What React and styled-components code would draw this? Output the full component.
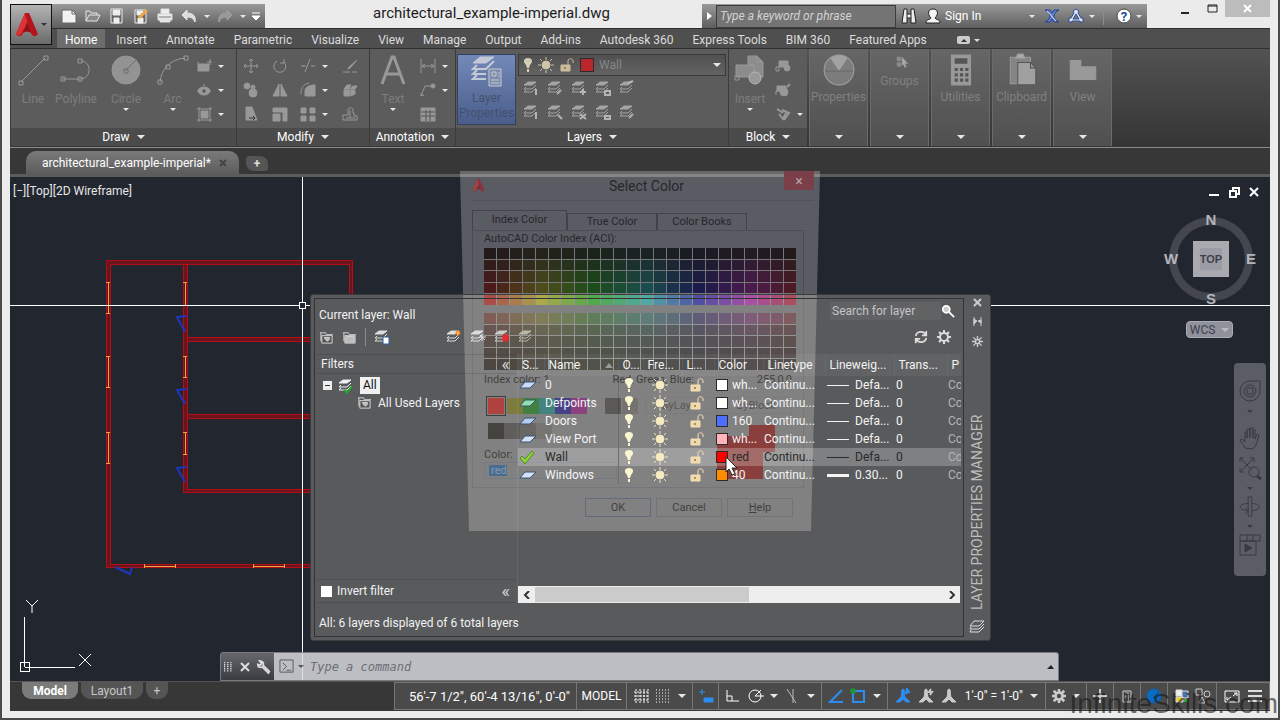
import React, { useState } from "react";
import styled, { createGlobalStyle } from "styled-components";

const GlobalStyle = createGlobalStyle`
  * {
    box-sizing: border-box;
  }

  body {
    margin: 0;
    font-family: Roboto, "Open Sans", sans-serif;
    font-size: 12px;
    color: #e6e6e6;
    background: #4a4a4a;
  }

  button, input, select {
    font: inherit;
    color: inherit;
    margin: 0;
    padding: 0;
    border: none;
    background: none;
  }

  svg {
    display: block;
    flex: none;
  }
`;

// Window frame
const Page = styled.div`
  position: relative;
  display: flex;
  flex-direction: column;
  min-height: 100vh;
  padding: 0 8px 7px;
  border: solid #4a4a4a;
  border-width: 0 2px 2px;
  background: #ebebeb;
  overflow: hidden;
`;

const Header = styled.header`
  display: grid;
  grid-template-columns: 42px 1fr;
  grid-template-rows: 28px 21px;
`;

const AppButton = styled.button`
  grid-area: 1 / 1 / 3 / 2;
  z-index: 1;
  display: flex;
  align-items: center;
  justify-content: center;
  gap: 2px;
  height: 41px;
  margin-top: 4px;
  border: 1px solid #111;
  background: linear-gradient(#b4b4b4, #6a6a6a);
`;

const TitleRow = styled.div`
  grid-area: 1 / 2;
  display: flex;
  align-items: flex-end;
`;

const BarGroup = styled.div`
  display: flex;
  align-items: center;
  height: 24px;
  background: linear-gradient(#9a9a9a, #5e5e5e);
`;

const QuickBar = styled(BarGroup)`
  width: 213px;
  padding-left: 5px;
`;

const QuickButton = styled.button`
  display: flex;
  align-items: center;
  justify-content: center;
  width: ${(p) => p.$w || 24}px;
  height: 22px;
`;

const FileTitle = styled.h1`
  flex: 1;
  margin: 0;
  padding-left: 16px;
  font-size: 15px;
  font-weight: 400;
  line-height: 30px;
  text-align: center;
  color: #1c1c1c;
`;

const SearchGroup = styled(BarGroup)`
  width: 445px;
`;

const SearchInput = styled.input`
  width: 180px;
  height: 23px;
  padding-left: 3px;
  border: 1px solid #3c3c3c;
  background: #747474;
  font-style: italic;

  &::placeholder {
    color: #d2d2d2;
    opacity: 1;
  }
`;

const SignIn = styled.button`
  width: 77px;
  text-align: left;
  color: #fff;
`;

const BarDivider = styled.span`
  width: 1px;
  height: 18px;
  margin: 0 ${(p) => p.$gap || 0}px;
  background: #8c8c8c;
`;

const WindowButtons = styled.div`
  display: flex;
  align-self: flex-start;
  align-items: center;
  width: 123px;
  height: 17px;
  padding-left: 25px;
  color: #222;
`;

const WindowButton = styled.button`
  display: flex;
  align-items: center;
  justify-content: center;
  width: 27px;
  height: 17px;
`;

const CloseWindow = styled(WindowButton)`
  width: 45px;
  background: #bcbcbc;
  color: #fff;
`;

const TabRow = styled.nav`
  grid-area: 2 / 1 / 3 / 3;
  display: flex;
  align-items: stretch;
  padding-left: 47px;
  border: solid #303030;
  border-width: 1px 0;
  background: #4f4f4f;
`;

const RibbonTab = styled.button`
  padding: 2px 8px 0;
  margin-right: 3px;
  color: ${(p) => (p.$active ? "#fff" : "#dcdcdc")};
  background: ${(p) => (p.$active ? "#6d6d6d" : "transparent")};
`;

// Ribbon
const Ribbon = styled.section`
  display: flex;
  height: 99px;
  padding-bottom: 1px;
  border-bottom: 1px solid #8b8b8b;
  background: linear-gradient(#525252, #353535);
`;

const Panel = styled.div`
  display: flex;
  flex-direction: column;
  width: ${(p) => p.$w}px;
  border-left: 1px solid #3b3b3b;
  background: #5c5c5c;
`;

const PanelBody = styled.div`
  display: flex;
  flex: 1;
  padding: 5px 0 0 1px;
`;

const PanelTitle = styled.button`
  display: flex;
  align-items: center;
  justify-content: center;
  gap: 7px;
  height: 18px;
  color: #fff;
  background: #4b4b4b;
`;

const BigTool = styled.button`
  display: flex;
  flex-direction: column;
  align-items: center;
  width: ${(p) => p.$w}px;
  height: 71px;
  color: #7d7d7d;

  span {
    line-height: 18px;
  }
`;

const CaretGap = styled.i`
  display: block;
  padding-top: 4px;
`;

const ToolGrid = styled.div`
  display: grid;
  grid-template-columns: ${(p) => p.$cols};
  grid-auto-rows: 24px;
  align-content: start;
`;

const SmallTool = styled.button`
  display: flex;
  align-items: center;
  gap: 6px;
  padding-left: 5px;
`;

const LayerProps = styled(BigTool)`
  border: 1px solid #33415f;
  background: linear-gradient(#7389b8, #4a5d8a);
  color: #43516f;

  span {
    line-height: 15px;
  }
`;

const LayerSide = styled.div`
  padding-left: 2px;
`;

const LayerCombo = styled.button`
  display: flex;
  align-items: center;
  gap: 5px;
  width: 208px;
  height: 22px;
  padding: 0 4px;
  border: 1px solid #3a3a3a;
  background: linear-gradient(#505050, #636363);
  color: #858585;

  span {
    flex: 1;
    text-align: left;
  }
`;

const Dimmed = styled.i`
  opacity: 0.75;
`;

const Swatch = styled.i`
  width: ${(p) => p.$size || 12}px;
  height: ${(p) => p.$size || 12}px;
  border: 1px solid #2c2c2c;
  background: ${(p) => p.$color};
  flex: none;
`;

const FoldedPanel = styled.button`
  display: flex;
  flex-direction: column;
  align-items: center;
  width: 59px;
  margin-left: 2px;
  padding: 4px 0 7px;
  border: solid #6b6b6b;
  border-width: 0 1px;
  background: linear-gradient(#666, #505050);
  color: #808080;

  span {
    flex: 1;
    padding-top: 1px;
    line-height: 18px;
  }
`;

// Drawing tabs
const FileTabs = styled.div`
  display: flex;
  align-items: flex-end;
  height: 29px;
  padding-left: 16px;
  border-bottom: 3px solid #5c5c5c;
  background: #373737;
`;

const FileTab = styled.div`
  display: flex;
  align-items: center;
  gap: 8px;
  height: 23px;
  padding: 0 12px 0 16px;
  border-radius: 10px 10px 0 0;
  background: linear-gradient(#7a7a7a, #5c5c5c);
  color: #fff;
`;

const NewTab = styled.button`
  width: 22px;
  height: 15px;
  margin: 0 0 3px 7px;
  border-radius: 3px 8px 3px 8px;
  background: #555;
  font-weight: 700;
  line-height: 14px;
  color: #ddd;
`;

// Model space
const Canvas = styled.main`
  position: relative;
  flex: 1;
  background: #22262f;
`;

const Drawing = styled.svg`
  position: absolute;
  inset: 0;
  width: 100%;
  height: 100%;
`;

const ViewLabel = styled.div`
  position: relative;
  padding: 5px 3px;
  line-height: 18px;
`;

const ViewButtons = styled.div`
  position: absolute;
  top: 10px;
  right: 10px;
  display: flex;
  gap: 9px;
  color: #fff;
`;

const ViewCube = styled.svg`
  position: absolute;
  top: 32px;
  right: 9px;
  font-family: "Liberation Sans", Arial, sans-serif;
  font-weight: 700;
`;

const Wcs = styled.button`
  position: absolute;
  top: 144px;
  right: 37px;
  display: flex;
  align-items: center;
  justify-content: space-around;
  width: 47px;
  height: 17px;
  border: 1px solid #aaacb5;
  border-radius: 4px;
  background: #8f919b;
  color: #3e414c;
`;

const NavBar = styled.div`
  position: absolute;
  top: 186px;
  right: 4px;
  display: flex;
  flex-direction: column;
  align-items: center;
  width: 32px;
  height: 213px;
  padding-top: 16px;
  border-radius: 4px;
  background: #5b5d64;
  color: #383a42;
`;

const NavItem = styled.button`
  display: flex;
  flex-direction: column;
  align-items: center;
  gap: 7px;
  height: ${(p) => p.$h}px;
`;

// Layer properties palette, see-through so the dialog shows behind it
const Palette = styled.section`
  position: absolute;
  top: 117px;
  left: 300px;
  display: flex;
  width: 681px;
  height: 347px;
  padding: 3px 0 3px 3px;
  border: 1px solid #3c3c3c;
  border-radius: 3px;
  background: rgba(234, 228, 212, 0.28);
  color: #f2f2f2;
`;

const PaletteMain = styled.div`
  flex: 1;
  display: flex;
  flex-direction: column;
  border: 1px solid #333;
  min-width: 0;
`;

const PaletteTop = styled.div`
  display: flex;
  justify-content: space-between;
  height: 55px;
  padding: 0 6px 0 4px;
`;

const CurrentLayer = styled.div`
  padding-top: 6px;
  line-height: 20px;
`;

const ToolLine = styled.div`
  display: flex;
  align-items: center;
  gap: 8px;
  height: 24px;
`;

const NewLayerTools = styled.div`
  display: flex;
  gap: 8px;
  padding-left: 48px;
`;

const SearchBox = styled.div`
  display: flex;
  flex-direction: column;
  align-items: flex-end;
  gap: 2px;
`;

const LayerSearch = styled.label`
  display: flex;
  align-items: center;
  height: 24px;
  padding-right: 2px;

  input {
    width: 111px;
    height: 18px;
    padding-left: 2px;
    background: rgba(255, 255, 255, 0.05);
  }

  input::placeholder {
    color: #c4c4c4;
    opacity: 1;
  }
`;

const ToolsRight = styled(ToolLine)`
  padding-right: 5px;
`;

const SplitRow = styled.div`
  display: flex;
  flex: 1;
  min-height: 0;
`;

const Filters = styled.div`
  display: flex;
  flex-direction: column;
  width: 203px;
  padding: 0 2px;
  border-right: 1px solid rgba(255, 255, 255, 0.08);
`;

const FiltersTitle = styled.div`
  display: flex;
  justify-content: space-between;
  align-items: center;
  height: 20px;
  padding: 0 5px 0 4px;
  border: solid rgba(0, 0, 0, 0.12);
  border-width: 1px 0;
`;

const Fold = styled.button`
  font-size: 18px;
  line-height: 16px;
  color: #d0d0d0;
`;

const Tree = styled.div`
  flex: 1;
  padding: 3px 6px;
`;

const TreeRow = styled.div`
  display: flex;
  align-items: center;
  gap: 6px;
  height: 17px;
  padding-left: ${(p) => p.$indent || 0}px;
`;

const TreeMark = styled.b`
  padding: 0 3px;
  font-weight: 400;
  line-height: 17px;
  color: #111;
  background: #f0f0f0;
`;

const Expander = styled.button`
  display: flex;
  align-items: center;
  justify-content: center;
  width: 9px;
  height: 9px;
  background: #eee;
`;

const InvertRow = styled.div`
  display: flex;
  justify-content: space-between;
  align-items: center;
  height: 24px;
  padding: 0 5px 0 4px;
  border: solid rgba(0, 0, 0, 0.12);
  border-width: 1px 0;

  label {
    display: flex;
    align-items: center;
    gap: 5px;
  }

  input {
    appearance: none;
    width: 11px;
    height: 11px;
    background: #fff;
  }
`;

const LayerPane = styled.div`
  display: flex;
  flex-direction: column;
  justify-content: space-between;
  flex: 1;
  min-width: 0;
  padding-right: 3px;
  overflow: hidden;
`;

const LayerTable = styled.table`
  table-layout: fixed;
  width: 443px;
  border-collapse: collapse;

  th {
    height: 22px;
    padding: 0 0 0 4px;
    border-right: 1px solid rgba(255, 255, 255, 0.1);
    background: rgba(255, 255, 255, 0.05);
    font-weight: 400;
    text-align: left;
    white-space: nowrap;
    overflow: hidden;
  }

  th:last-child {
    border-right: none;
  }

  td {
    height: 18px;
    padding: 0 0 0 1px;
    white-space: nowrap;
    overflow: hidden;
    line-height: 16px;
  }

  td:nth-child(2) {
    border-right: 1px solid rgba(0, 0, 0, 0.15);
  }

  td:last-child {
    color: #b4b4b4;
  }
`;

const LayerRow = styled.tr`
  color: ${(p) => (p.$selected ? "#2a2a2a" : "#f4f4f4")};
  background: ${(p) => (p.$selected ? "rgba(255, 255, 255, 0.23)" : "transparent")};
`;

const Cell = styled.span`
  display: flex;
  align-items: center;
  gap: 4px;
  padding-left: ${(p) => p.$pad || 0}px;
`;

const SortHeading = styled.span`
  display: flex;
  align-items: center;
  justify-content: space-between;
  padding-right: 5px;
`;

const WeightLine = styled.i`
  width: 22px;
  height: ${(p) => p.$h}px;
  margin-right: 2px;
  background: currentColor;
`;

const ScrollBar = styled.div`
  display: flex;
  align-items: center;
  height: 17px;
  background: #eee;
  color: #333;
`;

const ScrollButton = styled.button`
  display: flex;
  align-items: center;
  justify-content: center;
  width: 17px;
  height: 17px;
`;

const ScrollThumb = styled.div`
  width: 214px;
  height: 15px;
  background: #cbcbcb;
`;

const ScrollTrack = styled.div`
  flex: 1;
`;

const PaletteStatus = styled.div`
  padding: 11px 4px 0;
  height: 33px;
  line-height: 18px;
`;

const PaletteSide = styled.div`
  display: flex;
  flex-direction: column;
  align-items: center;
  width: 26px;
  padding: 0 0 3px;
  color: #ccc;
`;

const SideButton = styled.button`
  display: flex;
  align-items: flex-start;
  height: 19px;
`;

const SideTitle = styled.h2`
  flex: 1;
  margin: 0 0 8px;
  font-size: 14px;
  font-weight: 400;
  line-height: 20px;
  writing-mode: vertical-rl;
  transform: rotate(180deg);
  color: #bdbdbd;
`;

// Select color dialog, half faded out
const Dialog = styled.section`
  position: absolute;
  top: -6px;
  left: 450px;
  display: flex;
  flex-direction: column;
  width: 360px;
  height: 360px;
  padding: 0 12px;
  clip-path: polygon(0 0, 100% 0, 351px 100%, 9px 100%);
  background: rgba(255, 255, 255, 0.25);
  font-size: 11px;
  color: #26272d;
`;

const DialogTitle = styled.div`
  display: flex;
  align-items: flex-start;
  justify-content: space-between;
  height: 30px;
  margin-right: -6px;
  border-bottom: 1px solid rgba(60, 60, 70, 0.3);

  svg {
    margin: 8px 24px 0 0;
    opacity: 0.6;
  }

  h2 {
    margin: 0;
    font-size: 14px;
    font-weight: 400;
    line-height: 30px;
  }
`;

const DialogClose = styled.button`
  width: 30px;
  height: 19px;
  background: #7a3f48;
  color: #b5a2a6;
  font-size: 14px;
  line-height: 18px;
`;

const DialogTabs = styled.div`
  display: flex;
  align-items: flex-end;
  height: 29px;
`;

const DialogTab = styled.button`
  width: ${(p) => (p.$active ? 95 : 90)}px;
  height: ${(p) => (p.$active ? 20 : 17)}px;
  padding-bottom: 2px;
  border: 1px solid rgba(40, 42, 50, 0.5);
  border-bottom: none;
`;

const DialogPane = styled.div`
  display: flex;
  flex-direction: column;
  height: 258px;
  margin: 0 4px 0 0;
  padding: 0 7px 0 11px;
  border: 1px solid rgba(40, 42, 50, 0.3);

  p {
    margin: 0;
    height: 17px;
    line-height: 15px;
  }
`;

const ColorGrid = styled.div`
  display: grid;
  flex: none;
  grid-template-columns: repeat(24, 1fr);
  grid-template-rows: repeat(5, 1fr);
  gap: 1px;
  height: 57px;
  margin-bottom: 8px;
  background: #74767a;
`;

const ColorCell = styled.i.attrs((p) => ({ style: { background: p.$color } }))`
  display: block;
`;

const InfoRow = styled.div`
  display: flex;
  justify-content: space-between;
  flex: none;
  height: 23px;
  padding-right: 4px;
  margin-top: -6px;
  line-height: 16px;
  color: #000;
`;

const SwatchRow = styled.div`
  display: flex;
  flex: none;
  align-items: center;
  height: 21px;
  margin-bottom: 4px;
  padding-left: 4px;
`;

const DialogSwatch = styled.i`
  width: 16px;
  height: 16px;
  margin-right: ${(p) => p.$gap || 0}px;
  outline: ${(p) => (p.$active ? "1px solid #000" : "none")};
  outline-offset: 1px;
  background: ${(p) => p.$color};
`;

const ByButton = styled.button`
  width: 72px;
  height: 17px;
  margin-left: 3px;
  border: 1px solid rgba(60, 60, 60, 0.2);
  color: #222;
`;

const ColorEntry = styled.div`
  display: flex;
  justify-content: space-between;
  color: #000;

  label {
    display: block;
    padding-top: 3px;
    line-height: 14px;
  }

  input {
    display: block;
    width: 133px;
    height: 17px;
    padding-left: 6px;
    border: 1px solid rgba(50, 70, 110, 0.4);
    background: linear-gradient(#0c4078, #0c4078) 4px 2px / 18px 11px no-repeat;
    color: #5f7d9e;
  }
`;

const PreviewBack = styled.i`
  flex: none;
  width: 58px;
  height: 54px;
  margin: -20px 21px 0 0;
  background: #670004;
  clip-path: polygon(32px 0, 58px 0, 58px 27px, 46px 27px, 46px 54px, 0 54px, 0 11px, 32px 11px);
`;

const DialogButtons = styled.div`
  display: flex;
  justify-content: flex-end;
  gap: 5px;
  padding: 10px 15px 0 0;
`;

const DialogButton = styled.button`
  width: 66px;
  height: 19px;
  border: 1px solid ${(p) => (p.$main ? "rgba(20, 40, 90, 0.6)" : "rgba(40, 40, 40, 0.35)")};
  color: #000;
`;

const Pointer = styled.svg`
  position: absolute;
  top: 279px;
  left: 715px;
`;

// Command line
const CommandLine = styled.div`
  position: absolute;
  left: 210px;
  bottom: 0;
  display: flex;
  width: 839px;
  height: 29px;
  border: 1px solid #777a80;
  border-radius: 3px 3px 0 0;
  background: rgba(218, 219, 224, 0.84);
`;

const CommandHandle = styled.div`
  display: flex;
  align-items: center;
  justify-content: space-around;
  width: 53px;
  background: linear-gradient(#65676c, #3a3c42);
  color: #ddd;
`;

const CommandPrompt = styled.label`
  display: flex;
  align-items: center;
  gap: 4px;
  flex: 1;
  padding: 0 3px 0 5px;
  color: #55575f;

  input {
    flex: 1;
    padding-left: 2px;
    font-family: "DejaVu Sans Mono", "Liberation Mono", monospace;
    font-style: italic;
  }

  input::placeholder {
    color: #6c6e75;
    opacity: 1;
  }
`;

// Status bar
const Footer = styled.footer`
  display: flex;
  justify-content: space-between;
  height: 30px;
  border-top: 1px solid #555;
  background: #373737;
`;

const LayoutTabs = styled.div`
  display: flex;
  padding-left: 12px;
`;

const LayoutTab = styled.button`
  width: ${(p) => p.$w}px;
  height: 17px;
  margin-right: 3px;
  border-radius: 0 0 9px 9px;
  background: ${(p) => (p.$active ? "#7b7b7b" : "#555")};
  color: ${(p) => (p.$active ? "#fff" : "#c6c6c6")};
  font-weight: ${(p) => (p.$active ? 700 : 400)};
  line-height: 16px;
`;

const Status = styled.div`
  display: flex;
  width: 876px;
  height: 28px;
  border: 1px solid #777;
  background: #4a4a4a;
  color: #fff;
`;

const StatusCell = styled.div`
  display: flex;
  align-items: center;
  justify-content: space-around;
  width: ${(p) => p.$w}px;
  padding: 0 3px;
  border-right: 1px solid #777;
  white-space: nowrap;

  &:last-child {
    flex: 1;
    border-right: none;
  }
`;

const Coordinates = styled(StatusCell)`
  justify-content: flex-end;
  padding-right: 6px;
  font-size: 13px;
`;

const Watermark = styled.div`
  position: absolute;
  right: 0;
  bottom: 0;
  font-family: "Liberation Sans", Arial, sans-serif;
  font-size: 28px;
  line-height: 28px;
  color: rgba(25, 25, 25, 0.62);
  pointer-events: none;
`;

const Icon = ({ size = 16, box = 16, color = "currentColor", sw = 1, children }) => (
  <svg width={size} height={size} viewBox={`0 0 ${box} ${box}`} fill="none" stroke={color} strokeWidth={sw}>
    {children}
  </svg>
);

const Caret = ({ size = 8, color = "#e8e8e8" }) => (
  <svg width={size} height={size / 2} viewBox="0 0 8 4">
    <path d="M0 0h8L4 4z" fill={color} />
  </svg>
);

const Logo = ({ size }) => (
  <svg width={size} height={size} viewBox="0 0 24 24">
    <path d="M10 0h4l9 21c-2 3-6 3-7-1-2-2-6-2-8 0-1 4-5 4-7 1z" fill="#b3151c" />
    <path d="M10 0l3 12-5 5c-1 5-4 6-7 4z" fill="#dc3335" />
    <path d="M12 9l4 11c-2-2-6-2-8 0z" fill="#8e1218" />
  </svg>
);

const Sheets = ({ color = "#b4b4b4", size = 16, children }) => (
  <Icon size={size} color={color}>
    <path d="M5 2h8L9 5H1z" fill={color} />
    <path d="M3 7l-2 2h8l4-4M3 10l-2 2h8l4-4" />
    {children}
  </Icon>
);

const G = "#989898";

const draw = {
  line: <path d="M4 28L28 4M2 27h4v4H2zM27 2h4v4h-4z" />,
  poly: <path d="M2 25h18c12 0 12-18 1-18M1 23h4v4H1zM18 23h4v4h-4zM18 5h4v4h-4z" />,
  circle: (
    <>
      <circle cx="16" cy="16" r="14" fill="#939393" />
      <path d="M15 17L26 6M14 15h4v4h-4z" stroke="#6c6c6c" />
    </>
  ),
  arc: <path d="M3 28C4 16 13 5 28 4M1 26h4v4H1zM9 11h4v4H9zM27 2h4v4h-4z" />,
  rect: (
    <>
      <path d="M2 6h11v7H2z" fill={G} />
      <path d="M1 5h2M14 1v6M11 4h5" />
    </>
  ),
  ellipse: (
    <>
      <ellipse cx="8" cy="9" rx="6" ry="4" fill={G} />
      <path d="M8 7v4M6 9h4" stroke="#444" />
      <path d="M1 9h1M14 9h1M8 2v2" />
    </>
  ),
  hatch: (
    <>
      <path d="M5 5h7v7H5z" fill={G} />
      <path d="M1 3h15M1 14h15M3 1v15M14 1v15" />
    </>
  ),
};

const modify = {
  move: <path d="M8 1v5M8 10v5M1 8h5M10 8h5M6 3l2-2 2 2M6 13l2 2 2-2M3 6L1 8l2 2M13 6l2 2-2 2M7 7h2v2H7z" />,
  rotate: <path d="M5 3a6 6 0 1 0 7 1M12 1v4h-4" />,
  trim: <path d="M1 8h5M11 8h4M5 14L10 1M3 8h1" />,
  erase: <path d="M15 2L8 10l-2 1 1-2zM1 14h7M10 14h5" fill={G} />,
  copy: (
    <g fill={G}>
      <circle cx="4" cy="4" r="3" />
      <circle cx="10" cy="5" r="2" />
      <circle cx="10" cy="11" r="4" />
    </g>
  ),
  mirror: <path d="M7 2v12H1zM9 2v12h6z" fill={G} />,
  fillet: (
    <>
      <path d="M5 14V9c0-4 4-6 10-6v11z" fill={G} />
      <path d="M1 12c0-7 3-10 8-11" />
    </>
  ),
  explode: <path d="M2 8h6v6H2zM8 7l3-3h4l-2 3zM9 8h4v4l-4 2zM2 7l3-4h4L7 7z" fill={G} />,
  stretch: (
    <>
      <path d="M3 1h6l5 13H3z" fill={G} />
      <path d="M6 12h6M10 10l2 2-2 2" stroke="#333" />
    </>
  ),
  scale: (
    <>
      <path d="M1 2h14v13h-4V6H1z" fill={G} />
      <path d="M1 8h7v7H1z" fill={G} />
    </>
  ),
  array: <path d="M1 2h5v5H1zM10 2h5v5h-5zM1 10h5v5H1zM10 10h5v5h-5z" fill={G} />,
  offset: <path d="M1 14h14v-4h-3V7h-1V4c0-3-5-3-5 0v5H1zM4 12h9M8 12V4" />,
};

const block = {
  create: (
    <>
      <path d="M4 3h9v6H4z" fill={G} />
      <path d="M1 9h3v4H1z" />
      <circle cx="12" cy="10" r="3" fill={G} />
    </>
  ),
  edit: (
    <>
      <path d="M2 4h9v5H2z" fill={G} />
      <path d="M1 13V9h3" />
      <circle cx="9" cy="10" r="4" fill={G} />
      <path d="M12 5l3-3" strokeWidth="2" />
    </>
  ),
  attr: <path d="M2 3l6 4M4 8l4 5 4-8M7 4l7 3-5 7" strokeWidth="2" />,
};

const Bulb = () => (
  <svg width="10" height="16" viewBox="0 0 10 16">
    <path d="M5 1c5 0 5 4 2 7l-1 3H4L3 8C0 5 0 1 5 1zM4 12h2v3H4z" fill="#fbf6d2" />
  </svg>
);

const Sun = () => (
  <Icon color="#f1e6be">
    <circle cx="8" cy="8" r="4" fill="#f7ebc3" />
    <path d="M8 0v3M8 13v3M0 8h3M13 8h3M2 2l2 2M12 12l2 2M14 2l-2 2M2 14l2-2" />
  </Icon>
);

const Lock = () => (
  <Icon color="#f3dfb5">
    <path d="M2 8h9v6H2z" fill="#f3d9a8" />
    <path d="M9 8V4c0-3 5-3 5 0v2" />
    <path d="M6 10v2" stroke="#444" />
  </Icon>
);

const Sheet = ({ color }) => (
  <svg width="18" height="14" viewBox="0 0 18 14">
    <path d="M6 4h11l-6 6H1z" fill={color} stroke="#3a5470" />
  </svg>
);

const Folder = ({ tree }) => (
  <Icon size={15} color="#d8d8d8">
    <path d="M1 3h6l1 2h7M3 6h11v8H3zM2 3v9" />
    <path d={tree ? "M6 8h5v2L9 12 6 9z" : "M4 7h9v6H4z"} fill="#bbb" />
  </Icon>
);

const menu = ["Home", "Insert", "Annotate", "Parametric", "Visualize", "View", "Manage", "Output", "Add-ins", "Autodesk 360", "Express Tools", "BIM 360", "Featured Apps"];

const layers = [
  { name: "0", sheet: "#c9dcf5", color: "#fff", label: "wh..." },
  { name: "Defpoints", sheet: "#8fe0ae", color: "#fff", label: "wh..." },
  { name: "Doors", sheet: "#b7cdf0", color: "#4c6fff", label: "160" },
  { name: "View Port", sheet: "#d3e2f7", color: "#ffb4ba", label: "wh..." },
  { name: "Wall", color: "#ff0000", label: "red", selected: true },
  { name: "Windows", sheet: "#d3e2f7", color: "#ff8c00", label: "40", weight: "0.30..." },
];

const columns = [
  ["S...", 26],
  ["Name", 74],
  ["O...", 25],
  ["Fre...", 39],
  ["L...", 32],
  ["Color", 49],
  ["Linetype", 62],
  ["Lineweig...", 69],
  ["Trans...", 53],
  ["P", 14],
];

// ACI colours, one hue every 15 degrees
const hues = Array.from({ length: 24 }, (_, i) => i * 15);
const darkRows = [[15, 12], [30, 15], [42, 18], [50, 20], [75, 33]];
const paleRows = [[36, 25], [24, 17], [20, 13], [20, 9], [24, 5]];

const Aci = ({ rows }) => (
  <ColorGrid>
    {rows.map(([s, l], r) =>
      hues.map((h) => <ColorCell key={`${r}-${h}`} $color={`hsl(${h}, ${s}%, ${l}%)`} />)
    )}
  </ColorGrid>
);

const Small = ({ children, caret, label }) => (
  <SmallTool aria-label={label}>
    <Icon color={G}>{children}</Icon>
    {caret && <Caret size={6} />}
  </SmallTool>
);

const Big = ({ w, label, caret, children }) => (
  <BigTool $w={w}>
    <Icon size={32} box={32} color={G}>
      {children}
    </Icon>
    <CaretGap />
    <span>{label}</span>
    {caret && <Caret size={6} />}
  </BigTool>
);

const Title = ({ children }) => (
  <PanelTitle>
    {children}
    <Caret />
  </PanelTitle>
);

const TopBar = () => (
  <Header>
    <AppButton aria-label="Application menu">
      <Logo size={24} />
      <Caret size={6} color="#333" />
    </AppButton>
    <TitleRow>
      <QuickBar>
        <QuickButton aria-label="New">
          <Icon color="#666"><path d="M1 2h10l4 4v9H1z" fill="#f2f2f2" /><path d="M11 2v4h4" /></Icon>
        </QuickButton>
        <QuickButton aria-label="Open">
          <Icon color="#e8e8e8"><path d="M1 13V3h4l1 2h6v2" /><path d="M1 13l3-6h11l-3 6z" fill="#888" /></Icon>
        </QuickButton>
        <QuickButton aria-label="Save">
          <Icon color="#eee"><path d="M2 1h11v14H2z" fill="#666" /><path d="M4 2h7v5H4zM5 10h5v5H5z" fill="#eee" /></Icon>
        </QuickButton>
        <QuickButton aria-label="Save as">
          <Icon color="#eee"><path d="M2 2h11v13H2z" fill="#666" /><path d="M4 3h6v4H4zM5 10h5v5H5z" fill="#eee" /><path d="M6 10l8-8" stroke="#eaa646" strokeWidth="3" /></Icon>
        </QuickButton>
        <QuickButton aria-label="Print">
          <Icon color="#ddd"><path d="M4 1h8v5H4zM1 6h14v6H1zM3 11h10v3H3z" fill="#eee" /><path d="M2 9h12" stroke="#777" /></Icon>
        </QuickButton>
        <QuickButton aria-label="Undo">
          <Icon color="#e6e6e6"><path d="M6 2v3c7 0 9 4 8 9-2-4-4-5-8-5v3L1 7z" fill="#ddd" /></Icon>
        </QuickButton>
        <QuickButton aria-label="Undo list" $w={12}><Caret size={6} /></QuickButton>
        <QuickButton aria-label="Redo">
          <Icon color="#a0a0a0"><path d="M10 2v3C3 5 1 9 2 14c2-4 4-5 8-5v3l5-5z" fill="#999" /></Icon>
        </QuickButton>
        <QuickButton aria-label="Redo list" $w={12}><Caret size={6} /></QuickButton>
        <QuickButton aria-label="Customize" $w={14}>
          <Icon size={10} box={10} color="#fff"><path d="M1 2h8" /><path d="M1 5h8L5 9z" fill="#fff" /></Icon>
        </QuickButton>
      </QuickBar>
      <FileTitle>architectural_example-imperial.dwg</FileTitle>
      <SearchGroup>
        <QuickButton aria-label="Expand" $w={14}>
          <svg width="5" height="8"><path d="M0 0l5 4-5 4z" fill="#fff" /></svg>
        </QuickButton>
        <SearchInput aria-label="Search help" placeholder="Type a keyword or phrase" />
        <QuickButton aria-label="Find" $w={25}>
          <Icon color="#222"><path d="M3 1h3v5h4V1h3l2 14h-5v-5H6v5H1z" fill="#eee" /><path d="M6 6v4M10 6v4" /></Icon>
        </QuickButton>
        <QuickButton aria-label="Account">
          <Icon color="#222"><path d="M1 15c0-4 4-3 5-5-4-4-3-9 2-9s6 5 2 9c1 2 5 1 5 5z" fill="#f4f4f4" /></Icon>
        </QuickButton>
        <SignIn>Sign In</SignIn>
        <QuickButton aria-label="Sign in menu" $w={20}><Caret size={6} /></QuickButton>
        <QuickButton aria-label="Exchange" $w={20}>
          <Icon color="#24428f"><path d="M1 2h5l2 3 2-3h5c-3 1-5 4-5 6s2 5 5 6h-5l-2-3-2 3H1c3-1 5-4 5-6S4 3 1 2z" fill="#5f80cd" /><path d="M3 3l9 10" stroke="#dfe7fa" /></Icon>
        </QuickButton>
        <QuickButton aria-label="Autodesk 360" $w={27}>
          <Icon color="#2f4c94"><path d="M8 1l3 2-1 2 3 5h2v4h-3v-1H4v1H1v-4h2l3-5-1-2zM8 6l-3 5h6z" fill="#dce3f5" fillRule="evenodd" /></Icon>
        </QuickButton>
        <Caret size={6} />
        <BarDivider $gap={8} />
        <QuickButton aria-label="Help">
          <svg width="16" height="16" viewBox="0 0 16 16">
            <circle cx="8" cy="8" r="7" fill="#fff" stroke="#444" />
            <text x="8" y="13" fontSize="13" fontWeight="700" fill="#224796" textAnchor="middle">?</text>
          </svg>
        </QuickButton>
        <Caret size={6} />
      </SearchGroup>
      <WindowButtons>
        <WindowButton aria-label="Minimize"><svg width="9" height="10"><path d="M0 8h8v2H0z" fill="#222" /></svg></WindowButton>
        <WindowButton aria-label="Maximize"><Icon size={11} box={11} color="#222"><path d="M1 2h9v7H1zM1 3h9" /></Icon></WindowButton>
        <CloseWindow aria-label="Close"><Icon size={9} box={9} sw="2"><path d="M1 1l7 7M8 1L1 8" /></Icon></CloseWindow>
      </WindowButtons>
    </TitleRow>
    <TabRow>
      {menu.map((name, i) => (
        <RibbonTab key={name} $active={i === 0}>{name}</RibbonTab>
      ))}
      <QuickButton aria-label="Minimize ribbon" $w={62}>
        <svg width="24" height="8" viewBox="0 0 24 8">
          <rect width="13" height="8" rx="2" fill="#ccc" />
          <path d="M4 6h6L7 3z" fill="#333" />
          <path d="M17 3h6l-3 3z" fill="#ddd" />
        </svg>
      </QuickButton>
    </TabRow>
  </Header>
);

const LayerIcon = ({ mark }) => (
  <Sheets color="#a4a4a4">
    <path d={mark} stroke="#b4b4b4" strokeWidth="2" />
  </Sheets>
);

const marks = ["M13 9v6", "M10 14l4-4", "M12 9v6M9 12h6", "M10 11h5v4h-5z", "M9 3l5-2", "M13 8v7", "M11 11l4 4", "M9 10l6 5M15 10l-6 5", "M10 12h5v3h-5z", "M10 14l4-4"];

const folded = [
  ["Properties", <><circle cx="16" cy="16" r="14" fill="#7c7c7c" stroke="#a0a0a0" /><path d="M16 17L8 5q8-6 16 0z" fill="#a2a2a2" stroke="none" /><path d="M3 17h26" stroke="#6a6a6a" /></>],
  ["Groups", <><path d="M9 6h5v5H9zM9 14h5v5H9z" fill="#888" /><path d="M16 6l8 9h-4l2 5-2 1-2-5-2 2z" fill="#aaa" /></>],
  ["Utilities", <><path d="M7 2h18v28H7z" fill="#999" /><path d="M10 5h12v5H10zM10 14h3v3h-3zM15 14h3v3h-3zM20 14h3v3h-3zM10 19h3v3h-3zM15 19h3v3h-3zM20 19h3v3h-3zM10 24h3v3h-3zM15 24h3v3h-3zM20 24h3v3h-3z" fill="#555" stroke="none" /></>],
  ["Clipboard", <><path d="M5 4h19v25H5z" fill="#858585" /><path d="M10 5l2-4h5l2 4z" fill="#aaa" /><path d="M12 9h12l5 5v16H12z" fill="#a0a0a0" stroke="#555" /><path d="M24 9v5h5" stroke="#555" /></>],
  ["View", <path d="M4 7h10v6h14v12H4z" fill="#999" />],
];

const RibbonArea = () => (
  <Ribbon>
    <Panel $w={226}>
      <PanelBody>
        <Big w={42} label="Line">{draw.line}</Big>
        <Big w={44} label="Polyline">{draw.poly}</Big>
        <Big w={56} label="Circle" caret>{draw.circle}</Big>
        <Big w={37} label="Arc" caret>{draw.arc}</Big>
        <ToolGrid $cols="40px">
          <Small caret label="Rectangle">{draw.rect}</Small>
          <Small caret label="Ellipse">{draw.ellipse}</Small>
          <Small caret label="Hatch">{draw.hatch}</Small>
        </ToolGrid>
      </PanelBody>
      <Title>Draw</Title>
    </Panel>
    <Panel $w={133}>
      <PanelBody>
        <ToolGrid $cols="29px 28px 42px 30px">
          <Small label="Move">{modify.move}</Small>
          <Small label="Rotate">{modify.rotate}</Small>
          <Small label="Trim" caret>{modify.trim}</Small>
          <Small label="Erase">{modify.erase}</Small>
          <Small label="Copy">{modify.copy}</Small>
          <Small label="Mirror">{modify.mirror}</Small>
          <Small label="Fillet" caret>{modify.fillet}</Small>
          <Small label="Explode">{modify.explode}</Small>
          <Small label="Stretch">{modify.stretch}</Small>
          <Small label="Scale">{modify.scale}</Small>
          <Small label="Array" caret>{modify.array}</Small>
          <Small label="Offset">{modify.offset}</Small>
        </ToolGrid>
      </PanelBody>
      <Title>Modify</Title>
    </Panel>
    <Panel $w={86}>
      <PanelBody>
        <Big w={44} label="Text" caret>
          <path d="M5 30L15 3h2l10 27M9 20h14" strokeWidth="3" />
        </Big>
        <ToolGrid $cols="38px">
          <Small caret label="Dimension"><path d="M1 1v14M15 1v14M2 8h12M5 6L2 8l3 2M11 6l3 2-3 2" /></Small>
          <Small caret label="Leader"><path d="M1 14L5 4h6M1 11v3l3-1" /><circle cx="13" cy="4" r="2" fill={G} /></Small>
          <Small label="Table"><path d="M1 2h14v13H1z" fill={G} /><path d="M1 6h14M1 10h14M6 4v11M10 4v11" stroke="#555" /></Small>
        </ToolGrid>
      </PanelBody>
      <Title>Annotation</Title>
    </Panel>
    <Panel $w={273}>
      <PanelBody>
        <LayerProps $w={59}>
          <Icon size={32} box={32} color="#c3c9d6">
            <path d="M9 2h14l-8 6H2z" fill="#c3c9d6" />
            <path d="M6 10l-4 4h13l8-8M6 15l-4 4h13M6 20l-4 4h13" strokeWidth="2" />
            <path d="M18 14h12v17H18z" fill="#7f8dab" />
            <path d="M21 17h4v4h-4zM27 18h2M27 21h2M20 25h8M20 28h8" />
          </Icon>
          <CaretGap />
          <span>Layer</span>
          <span>Properties</span>
        </LayerProps>
        <LayerSide>
          <LayerCombo>
            <Dimmed><Bulb /></Dimmed>
            <Dimmed><Sun /></Dimmed>
            <Dimmed><Lock /></Dimmed>
            <Swatch $color="#b8272b" $size={14} />
            <span>Wall</span>
            <Caret />
          </LayerCombo>
          <ToolGrid $cols="repeat(5, 24px)">
            {marks.map((m, i) => (
              <SmallTool key={i} aria-label={`Layer tool ${i + 1}`}>
                <LayerIcon mark={m} />
              </SmallTool>
            ))}
          </ToolGrid>
        </LayerSide>
      </PanelBody>
      <Title>Layers</Title>
    </Panel>
    <Panel $w={79}>
      <PanelBody>
        <Big w={40} label="Insert" caret>
          <path d="M2 11h18v12H2zM14 2h9l6 6v15h-9V11h-6z" fill="#8c8c8c" />
          <circle cx="21" cy="24" r="6" fill="#999" stroke="#b5b5b5" />
          <path d="M1 22h4v4H1zM23 2v6h6" />
        </Big>
        <ToolGrid $cols="36px">
          <Small label="Create block">{block.create}</Small>
          <Small label="Edit block">{block.edit}</Small>
          <Small label="Attributes" caret>{block.attr}</Small>
        </ToolGrid>
      </PanelBody>
      <Title>Block</Title>
    </Panel>
    {folded.map(([name, art]) => (
      <FoldedPanel key={name}>
        <Icon size={name === "Groups" ? 18 : 34} box={name === "Groups" ? 26 : 32} color={G}>{art}</Icon>
        <span>{name}</span>
        <Caret />
      </FoldedPanel>
    ))}
  </Ribbon>
);

const Windows = ({ marks: list }) =>
  list.map(([x1, y1, x2, y2]) => (
    <path
      key={`${x1}-${y1}`}
      d={x1 === x2
        ? `M${x1} ${y1}V${y2}M${x1 - 2} ${y1}h4M${x1 - 2} ${y2}h4`
        : `M${x1} ${y1}H${x2}M${x1} ${y1 - 2}v4M${x2} ${y2 - 2}v4`}
    />
  ));

const FloorPlan = () => (
  <Drawing>
    <g transform="translate(-10 -177)" fill="none" shapeRendering="crispEdges">
      <g stroke="#6a141c" strokeWidth="4">
        <path d="M351 294V263H109V566H310M186 264V491H310M186 339H310M186 416H310" />
      </g>
      <g stroke="#b50d17">
        <path d="M352 294V260H106V567H310M349 294V264H110V564H310" />
        <path d="M183 265V492H310M187 265V489H310M188 337H310M188 341H310M188 414H310M188 418H310" />
      </g>
      <g stroke="#e9a73c">
        <Windows marks={[[108, 282, 108, 313], [108, 356, 108, 387], [108, 432, 108, 463], [185, 282, 185, 305], [185, 356, 185, 377], [185, 432, 185, 454], [144, 566, 175, 566], [253, 566, 284, 566]]} />
      </g>
      <g stroke="#1c37bd" strokeWidth="2" shapeRendering="auto">
        <path d="M187 316l-10 1 8 15M187 389l-10 1 8 14M187 467l-10 1 8 14M115 567l15 7 2-7" />
      </g>
      <g stroke="#fff">
        <path d="M302.500 177V302M302.500 309V700M10 305.500H299M306 305.500H310M991 305.500H4000M299.500 302.500h6v6h-6z" />
        <path d="M24.500 617v50M24.500 667.500H75M20.500 662.500h9v9h-9z" />
        <path d="M26 600l6 6 6-6M32 606v7M79 654l12 12M91 654L79 666" shapeRendering="auto" />
      </g>
    </g>
  </Drawing>
);

const Cube = () => (
  <ViewCube width="100" height="100" viewBox="0 0 100 100" textAnchor="middle">
    <circle cx="50" cy="50" r="38" fill="none" stroke="#44474f" strokeWidth="8" />
    <path d="M32 32h36v36H32z" fill="#a9aab0" />
    <path d="M39 39h22v22H39z" fill="#9c9da4" />
    <text x="50" y="54" fontSize="11" fill="#3f4149">TOP</text>
    <g fontSize="15" fill="#b3b5bc">
      <text x="50" y="16">N</text>
      <text x="50" y="95">S</text>
      <text x="10" y="55">W</text>
      <text x="90" y="55">E</text>
    </g>
  </ViewCube>
);

const LayerPalette = () => {
  const [invert, setInvert] = useState(false);

  return (
    <Palette>
      <PaletteMain>
        <PaletteTop>
          <div>
            <CurrentLayer>Current layer: Wall</CurrentLayer>
            <ToolLine>
              <Folder tree />
              <Folder />
              <BarDivider />
              <Sheets color="#ddd"><path d="M9 8h6v7H9z" fill="#fff" stroke="#2e5d9e" /></Sheets>
              <NewLayerTools>
                <Sheets color="#ddd"><circle cx="12" cy="4" r="2" fill="#ffc04d" stroke="#ff7417" /></Sheets>
                <Sheets color="#ddd"><path d="M12 5v7M9 8h7M10 6l5 5" /></Sheets>
                <Sheets color="#ccc"><path d="M9 6h5v6H9z" fill="#ea2931" stroke="#ea2931" /></Sheets>
                <Sheets color="#b8b8a8" />
              </NewLayerTools>
            </ToolLine>
          </div>
          <SearchBox>
            <LayerSearch>
              <input aria-label="Search for layer" placeholder="Search for layer" />
              <Icon size={14} color="#fff" sw="2"><circle cx="6" cy="6" r="4" fill="#ccc" /><path d="M9 9l6 6" /></Icon>
            </LayerSearch>
            <ToolsRight>
              <Icon size={14} color="#ddd" sw="2"><path d="M2 7c1-6 9-6 11-2M14 1v5H9M14 9c-1 6-9 6-11 2M2 15v-5h5" /></Icon>
              <Icon size={16} color="#ddd" sw="2"><circle cx="8" cy="8" r="4" /><path d="M8 1v3M8 12v3M1 8h3M12 8h3M3 3l2 2M11 11l2 2M13 3l-2 2M3 13l2-2" /></Icon>
            </ToolsRight>
          </SearchBox>
        </PaletteTop>
        <SplitRow>
          <Filters>
            <FiltersTitle>Filters<Fold aria-label="Collapse filters">«</Fold></FiltersTitle>
            <Tree>
              <TreeRow>
                <Expander aria-label="Collapse"><svg width="5" height="1"><path d="M0 0h5v1H0z" fill="#333" /></svg></Expander>
                <Sheets color="#eee"><path d="M6 12l3 3 5-7" stroke="#25a32a" strokeWidth="2" /></Sheets>
                <TreeMark>All</TreeMark>
              </TreeRow>
              <TreeRow $indent={34}>
                <Folder tree />
                All Used Layers
              </TreeRow>
            </Tree>
            <InvertRow>
              <label>
                <input type="checkbox" checked={invert} onChange={() => setInvert(!invert)} />
                Invert filter
              </label>
              <Fold aria-label="Collapse tree">«</Fold>
            </InvertRow>
          </Filters>
          <LayerPane>
            <LayerTable>
              <colgroup>
                {columns.map(([name, w]) => <col key={name} width={w} />)}
              </colgroup>
              <thead>
                <tr>
                  {columns.map(([name]) => (
                    <th key={name}>
                      {name === "Name" ? (
                        <SortHeading>
                          Name
                          <svg width="8" height="5"><path d="M0 5h8L4 0z" fill="#999" /></svg>
                        </SortHeading>
                      ) : name}
                    </th>
                  ))}
                </tr>
              </thead>
              <tbody>
                {layers.map((l) => (
                  <LayerRow key={l.name} $selected={l.selected}>
                    <td>
                      {l.selected
                        ? <Icon color="#4c8a22" sw="1"><path d="M1 9l2-2 3 3 7-8 2 2-9 11z" fill="#93d13c" /></Icon>
                        : <Sheet color={l.sheet} />}
                    </td>
                    <td>{l.name}</td>
                    <td><Cell $pad={4}><Bulb /></Cell></td>
                    <td><Cell $pad={8}><Sun /></Cell></td>
                    <td><Cell $pad={6}><Lock /></Cell></td>
                    <td><Cell $pad={1}><Swatch $color={l.color} />{l.label}</Cell></td>
                    <td>Continu...</td>
                    <td><Cell $pad={1}><WeightLine $h={l.weight ? 3 : 1} />{l.weight || "Defa..."}</Cell></td>
                    <td><Cell $pad={1}>0</Cell></td>
                    <td>Co</td>
                  </LayerRow>
                ))}
              </tbody>
            </LayerTable>
            <ScrollBar>
              <ScrollButton aria-label="Scroll left"><Icon size={8} box={8} sw="2"><path d="M6 0L2 4l4 4" /></Icon></ScrollButton>
              <ScrollThumb />
              <ScrollTrack />
              <ScrollButton aria-label="Scroll right"><Icon size={8} box={8} sw="2"><path d="M2 0l4 4-4 4" /></Icon></ScrollButton>
            </ScrollBar>
          </LayerPane>
        </SplitRow>
        <PaletteStatus>All: 6 layers displayed of 6 total layers</PaletteStatus>
      </PaletteMain>
      <PaletteSide>
        <SideButton aria-label="Close palette"><Icon size={9} box={9} sw="2"><path d="M1 1l7 7M8 1L1 8" /></Icon></SideButton>
        <SideButton aria-label="Auto-hide"><Icon size={9} box={9}><path d="M1 0v9M8 0v9" /><path d="M1 2l3 2-3 3zM8 3v3L5 4z" fill="#ccc" /></Icon></SideButton>
        <SideButton aria-label="Palette settings"><Icon size={11}><circle cx="8" cy="8" r="3" strokeWidth="2" /><path d="M8 0v5M8 11v5M0 8h5M11 8h5M2 2l4 4M10 10l4 4M14 2l-4 4M2 14l4-4" strokeWidth="2" /></Icon></SideButton>
        <SideTitle>LAYER PROPERTIES MANAGER</SideTitle>
        <Icon color="#ddd"><path d="M5 3h10l-5 5H1zM2 9l-1 2h9l5-5M2 12l-1 2h9l5-5" /></Icon>
      </PaletteSide>
    </Palette>
  );
};

const ColorDialog = () => (
  <Dialog aria-label="Select Color">
    <DialogTitle>
      <Logo size={13} />
      <h2>Select Color</h2>
      <DialogClose aria-label="Close dialog">×</DialogClose>
    </DialogTitle>
    <DialogTabs>
      <DialogTab $active>Index Color</DialogTab>
      <DialogTab>True Color</DialogTab>
      <DialogTab>Color Books</DialogTab>
    </DialogTabs>
    <DialogPane>
      <p>AutoCAD Color Index (ACI):</p>
      <Aci rows={darkRows} />
      <Aci rows={paleRows} />
      <InfoRow>
        <span>Index color: 1</span>
        <span>Red, Green, Blue:</span>
        <span>255,0,0</span>
      </InfoRow>
      <SwatchRow>
        <DialogSwatch $active $color="#990306" $gap={3} />
        {["#555405", "#025a0a", "#046062", "#060668", "#67045e"].map((c) => (
          <DialogSwatch key={c} $color={c} />
        ))}
        <DialogSwatch $color="transparent" $gap={2} />
        <DialogSwatch $color="#242424" $gap={1} />
        <DialogSwatch $color="#494949" $gap={4} />
        <ByButton>ByLayer</ByButton>
        <ByButton>ByBlock</ByButton>
      </SwatchRow>
      <SwatchRow>
        {["#060606", "#2c2c2c", "#383838", "#4c4c4c"].map((c) => (
          <DialogSwatch key={c} $color={c} />
        ))}
      </SwatchRow>
      <ColorEntry>
        <div>
          <label htmlFor="aci">Color:</label>
          <input id="aci" defaultValue="red" />
        </div>
        <PreviewBack />
      </ColorEntry>
    </DialogPane>
    <DialogButtons>
      <DialogButton $main>OK</DialogButton>
      <DialogButton>Cancel</DialogButton>
      <DialogButton><u>H</u>elp</DialogButton>
    </DialogButtons>
  </Dialog>
);

const Navigation = () => (
  <NavBar>
    <NavItem $h={47} aria-label="Wheel">
      <Icon size={24} box={24}><path d="M12 2h10v10a10 10 0 1 1-10-10z" /><circle cx="12" cy="12" r="6" /><path d="M9 9h6v6H9z" /></Icon>
      <Caret size={6} color="#383a42" />
    </NavItem>
    <NavItem $h={30} aria-label="Pan">
      <Icon size={24} box={24}><path d="M7 22L2 14l2-1 3 3V6h2v6V3h3v9V2h3v10V4h2v9l2-5 2 1-3 10-3 4z" /></Icon>
    </NavItem>
    <NavItem $h={40} aria-label="Zoom">
      <Icon size={24} box={24}><path d="M2 2l12 12M16 2L2 16M2 6V2h4M12 2h4v4M2 12v4h4" /><circle cx="16" cy="16" r="5" /><path d="M19 20l4 3" strokeWidth="3" /></Icon>
      <Caret size={6} color="#383a42" />
    </NavItem>
    <NavItem $h={37} aria-label="Orbit">
      <Icon size={22} box={24}><path d="M10 1h4v21h-4z" /><path d="M10 8C-2 9-1 15 9 16M14 8c12 1 10 7 0 8M7 13l3 3-3 3" /></Icon>
      <Caret size={6} color="#383a42" />
    </NavItem>
    <NavItem $h={24} aria-label="Show motion">
      <Icon size={24} box={24}><path d="M2 2h20v6H2zM2 8h16v14H2zM9 2v6M15 2v6" /><path d="M7 11l7 4-7 4z" fill="#383a42" /></Icon>
    </NavItem>
  </NavBar>
);

const Man = ({ color, extra }) => (
  <Icon color={color}>
    <path d="M8 1c2 0 1 6 2 8l5 5h-4l-3-3-3 3H1l5-5c1-2 0-8 2-8z" fill={color} />
    {extra && <path d={extra} strokeWidth="2" />}
  </Icon>
);

const BLUE = "#2d8cf0";

const StatusBar = () => (
  <Status>
    <Coordinates $w={182}>56'-7 1/2", 60'-4 13/16", 0'-0"</Coordinates>
    <StatusCell $w={50}>MODEL</StatusCell>
    <StatusCell $w={66}>
      <Icon><path d="M3 1v14M7 1v14M11 1v14M15 1v14M1 4h15M1 8h15M1 12h15" strokeDasharray="2 1" /></Icon>
      <Icon><path d="M1 2h15M1 5h15M1 8h15M1 11h15M1 14h15" strokeDasharray="1 2" /></Icon>
      <Caret />
    </StatusCell>
    <StatusCell $w={26}>
      <Icon color={BLUE}><path d="M4 1v6M1 4h6" /><path d="M6 10h9v4H6z" fill={BLUE} /></Icon>
    </StatusCell>
    <StatusCell $w={103}>
      <Icon><path d="M2 2v11h12M2 8h5v5" /></Icon>
      <Icon><circle cx="7" cy="8" r="6" /><path d="M7 8h9M7 8l6-6" /></Icon>
      <Caret />
      <Icon><path d="M3 1l9 14M9 1v14" stroke="#bbb" /></Icon>
      <Caret />
    </StatusCell>
    <StatusCell $w={66}>
      <Icon color={BLUE} sw="1"><path d="M14 2L2 14h13" strokeWidth="2" /></Icon>
      <Icon color={BLUE} sw="2"><path d="M3 3h11v11H3z" /><path d="M1 1h4v4H1z" fill="#1b982b" stroke="#1b982b" strokeWidth="1" /></Icon>
      <Caret />
    </StatusCell>
    <StatusCell $w={158}>
      <Man color={BLUE} extra="M12 1l2 3-3 1z" />
      <Man color="#c9c9c9" extra="M13 1l-2 3h3l-2 3" />
      <Man color="#c9c9c9" />
      <span>1'-0" = 1'-0"</span>
      <Caret />
    </StatusCell>
    <StatusCell $w={41}>
      <Icon size={14} color="#ccc" sw="3"><circle cx="8" cy="8" r="4" /><path d="M8 0v4M8 12v4M0 8h4M12 8h4M2 2l3 3M11 11l3 3M14 2l-3 3M2 14l3-3" /></Icon>
      <Caret />
    </StatusCell>
    <StatusCell $w={27}><Icon color="#ccc" sw="2"><path d="M8 1v14M1 8h14" /></Icon></StatusCell>
    <StatusCell $w={27}><Icon color="#ccc"><path d="M4 3h8v11H4zM6 5h4M6 8h1M9 8h1M6 10h1M9 10h1M6 12h1M9 12h1" /></Icon></StatusCell>
    <StatusCell $w={27}><Icon color="#0b5fb0"><circle cx="8" cy="8" r="7" fill="#0b6cc4" /><path d="M7 10l6-6" stroke="#123d70" /></Icon></StatusCell>
    <StatusCell $w={49}>
      <Icon color="#ddd"><path d="M2 2h6v6H2z" fill="#eee" /><path d="M8 3h6v7H8z" fill="#4a73ad" /><path d="M2 9h7v5H2z" fill="#e4c92c" /><path d="M10 11h4v3h-4z" fill="#3aa13f" stroke="none" /></Icon>
      <Icon color="#ccc"><path d="M1 1h6v6H1zM7 9l3 6H4z" /><circle cx="12" cy="6" r="3" /></Icon>
    </StatusCell>
    <StatusCell $w={53}>
      <Icon><path d="M1 3h14v11H1zM9 8l4-3M10 5h3v3M7 9l-4 3M3 9v3h3" /></Icon>
      <Icon color="#ddd" sw="2"><path d="M1 3h14M1 8h14M1 13h14" /></Icon>
    </StatusCell>
  </Status>
);

const App = () => (
  <>
    <GlobalStyle />
    <Page>
      <TopBar />
      <RibbonArea />
      <FileTabs>
        <FileTab>
          architectural_example-imperial*
          <Icon size={8} box={8} color="#444" sw="2"><path d="M1 1l6 6M7 1L1 7" /></Icon>
        </FileTab>
        <NewTab aria-label="New drawing">+</NewTab>
      </FileTabs>
      <Canvas>
        <FloorPlan />
        <ViewLabel>[−][Top][2D Wireframe]</ViewLabel>
        <ViewButtons>
          <Icon size={11} box={11} sw="2"><path d="M0 8h10" /></Icon>
          <Icon size={11} box={11} sw="2"><path d="M1 4h6v6H1zM4 4V1h6v6H8" /></Icon>
          <Icon size={11} box={11} sw="2"><path d="M1 1l8 8M9 1L1 9" /></Icon>
        </ViewButtons>
        <Cube />
        <Wcs>WCS<Caret color="#b9bbc3" /></Wcs>
        <Navigation />
        <ColorDialog />
        <LayerPalette />
        <Pointer width="14" height="20" viewBox="0 0 14 20">
          <path d="M1 1v15l3-3 3 6 3-1-3-6h5z" fill="#fff" stroke="#222" />
        </Pointer>
        <CommandLine>
          <CommandHandle>
            <Icon size={10}><path d="M1 0v16M6 0v16M11 0v16" strokeDasharray="2 1" strokeWidth="2" /></Icon>
            <Icon size={10} box={10} sw="2"><path d="M1 1l8 8M9 1L1 9" /></Icon>
            <Icon size={14} sw="2"><path d="M14 13L7 6c1-3-1-5-4-5l2 3-1 2-3-1c0 3 2 4 5 3l7 7z" /></Icon>
          </CommandHandle>
          <CommandPrompt>
            <Icon size={15}><path d="M1 1h14v13H1zM4 4l4 4-4 4M8 12h5" /></Icon>
            <Caret size={6} color="#55575f" />
            <input aria-label="Command" placeholder="Type a command" />
            <svg width="8" height="4"><path d="M0 4h7L4 0z" fill="#222" /></svg>
          </CommandPrompt>
        </CommandLine>
      </Canvas>
      <Footer>
        <LayoutTabs>
          <LayoutTab $active $w={56}>Model</LayoutTab>
          <LayoutTab $w={62}>Layout1</LayoutTab>
          <LayoutTab $w={22} aria-label="New layout">+</LayoutTab>
        </LayoutTabs>
        <StatusBar />
      </Footer>
      <Watermark>InfiniteSkills.com</Watermark>
    </Page>
  </>
);

export default App;
